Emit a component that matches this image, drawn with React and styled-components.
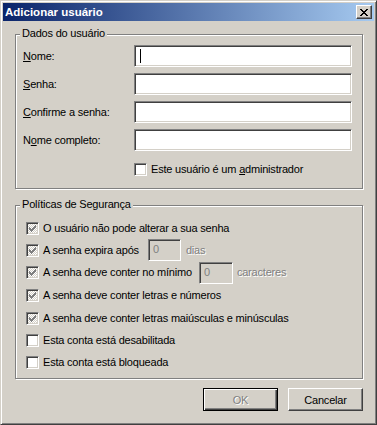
import styled, { createGlobalStyle, css } from "styled-components";

const GlobalStyle = createGlobalStyle`
  html, body {
    margin: 0;
    padding: 0;
    background: #d4d0c8;
  }
  body {
    font-family: "Liberation Sans", Arial, sans-serif;
    font-size: 11px;
    letter-spacing: -0.2px;
    color: #000;
  }
`;

const Window = styled.div`
  box-sizing: border-box;
  width: 377px;
  height: 425px;
  background: #d4d0c8;
  border: 1px solid;
  border-color: #d4d0c8 #404040 #404040 #d4d0c8;
  box-shadow: inset 1px 1px 0 #fff, inset -1px -1px 0 #808080;
  padding: 2px;
  display: flex;
  flex-direction: column;
`;

const TitleBar = styled.div`
  flex: none;
  height: 18px;
  display: flex;
  align-items: center;
  justify-content: space-between;
  padding: 0 2px;
  background: linear-gradient(to right, #0a246a, #a6caf0);
`;

const TitleText = styled.span`
  color: #fff;
  font-weight: bold;
  font-size: 11.5px;
  letter-spacing: 0;
  line-height: 18px;
`;

const raised = css`
  background: #d4d0c8;
  border: 1px solid;
  border-color: #fff #404040 #404040 #fff;
  box-shadow: inset -1px -1px 0 #808080;
`;

const CloseButton = styled.div`
  box-sizing: border-box;
  width: 16px;
  height: 14px;
  ${raised};
  display: flex;
  align-items: center;
  justify-content: center;
  padding-right: 1px;
`;

const Body = styled.div`
  flex: 1;
  display: flex;
  flex-direction: column;
  padding: 13px 11px 0 12px;
`;

const Group = styled.div`
  position: relative;
  border: 1px solid #808080;
  box-shadow: inset 1px 1px 0 #fff, 1px 1px 0 #fff;
  margin-top: ${(p) => p.$top || 0}px;
`;

const Legend = styled.span`
  position: absolute;
  top: -8px;
  left: 4px;
  padding: 0 2px;
  line-height: 13px;
  background: #d4d0c8;
`;

const UserForm = styled.div`
  display: grid;
  grid-template-columns: 111px 218px;
  row-gap: 6px;
  align-items: center;
  padding: 10px 10px 12px 7px;
`;

const FieldLabel = styled.label`
  line-height: 13px;
`;

const sunken = css`
  border: 1px solid;
  border-color: #808080 #fff #fff #808080;
  box-shadow: inset 1px 1px 0 #404040, inset -1px -1px 0 #d4d0c8;
`;

const TextBox = styled.div`
  box-sizing: border-box;
  height: 22px;
  width: ${(p) => p.$width || 218}px;
  ${sunken};
  background: ${(p) => (p.$disabled ? "#d4d0c8" : "#fff")};
  color: #808080;
  padding: 3px 4px;
  line-height: 13px;
  display: flex;
  align-items: flex-start;
`;

const Caret = styled.span`
  display: block;
  width: 1px;
  height: 14px;
  margin-left: 1px;
  background: #000;
`;

const CheckRow = styled.div`
  display: flex;
  align-items: center;
  height: ${(p) => p.$h || 13}px;
  grid-column: ${(p) => p.$col || "auto"};
  margin-top: ${(p) => p.$mt || 0}px;
`;

const Box = styled.span`
  box-sizing: border-box;
  flex: none;
  width: 13px;
  height: 13px;
  ${sunken};
  background: ${(p) =>
    p.$disabled
      ? "repeating-conic-gradient(#fff 0 25%, #d4d0c8 0 50%) 0 0 / 2px 2px"
      : "#fff"};
  display: flex;
`;

const CheckText = styled.span`
  margin-left: 4px;
  line-height: 13px;
  white-space: nowrap;
`;

const Etched = styled.span`
  color: #808080;
  text-shadow: 1px 1px 0 #fff;
  margin-left: ${(p) => p.$ml || 0}px;
  line-height: 13px;
`;

const PolicyList = styled.div`
  display: flex;
  flex-direction: column;
  padding: 11px 10px 5px 10px;
`;

const InlineBox = styled.div`
  margin-left: ${(p) => p.$ml || 6}px;
`;

const ButtonBar = styled.div`
  display: flex;
  justify-content: flex-end;
  gap: 10px;
  margin-top: 9px;
`;

const Button = styled.button`
  box-sizing: border-box;
  width: 75px;
  height: 23px;
  padding: 0;
  font: inherit;
  letter-spacing: inherit;
  color: #000;
  ${raised};
  ${(p) =>
    p.$default &&
    css`
      border-color: #000;
      box-shadow: inset 1px 1px 0 #fff, inset -1px -1px 0 #404040,
        inset -2px -2px 0 #808080;
    `}
  ${(p) =>
    p.disabled &&
    css`
      color: #808080;
      text-shadow: 1px 1px 0 #fff;
    `}
`;

const checkRows = [
  [6, 1],
  [5, 2],
  [0, 1, 4, 3],
  [0, 2, 3, 3],
  [0, 5],
  [1, 3],
  [2, 1],
];

function CheckMark({ color }) {
  return (
    <svg width="11" height="11" viewBox="0 0 11 11" shapeRendering="crispEdges">
      {checkRows.map((row, y) => {
        const rects = [];
        for (let i = 0; i < row.length; i += 2) {
          rects.push(
            <rect key={i} x={2 + row[i]} y={2 + y} width={row[i + 1]} height="1" fill={color} />
          );
        }
        return rects;
      })}
    </svg>
  );
}

const xRows = [
  [0, 2, 6, 2],
  [1, 2, 5, 2],
  [2, 4],
  [3, 2],
  [2, 4],
  [1, 2, 5, 2],
  [0, 2, 6, 2],
];

function CloseGlyph() {
  return (
    <svg width="8" height="7" viewBox="0 0 8 7" shapeRendering="crispEdges">
      {xRows.map((row, y) => {
        const rects = [];
        for (let i = 0; i < row.length; i += 2) {
          rects.push(<rect key={i} x={row[i]} y={y} width={row[i + 1]} height="1" fill="#000" />);
        }
        return rects;
      })}
    </svg>
  );
}

function Checkbox({ checked, disabled }) {
  return (
    <Box $disabled={disabled}>
      {checked && <CheckMark color={disabled ? "#808080" : "#000"} />}
    </Box>
  );
}

const fields = [
  { label: <><u>N</u>ome:</>, caret: true },
  { label: <><u>S</u>enha:</> },
  { label: <><u>C</u>onfirme a senha:</> },
  { label: <>N<u>o</u>me completo:</> },
];

export default function App() {
  return (
    <>
      <GlobalStyle />
      <Window>
        <TitleBar>
          <TitleText>Adicionar usuário</TitleText>
          <CloseButton>
            <CloseGlyph />
          </CloseButton>
        </TitleBar>
        <Body>
          <Group>
            <Legend>Dados do usuário</Legend>
            <UserForm>
              {fields.map((f, i) => [
                <FieldLabel key={"l" + i}>{f.label}</FieldLabel>,
                <TextBox key={"t" + i}>{f.caret && <Caret />}</TextBox>,
              ])}
              <CheckRow $col="2" $mt={6}>
                <Checkbox />
                <CheckText>
                  Este usuário é um <u>a</u>dministrador
                </CheckText>
              </CheckRow>
            </UserForm>
          </Group>

          <Group $top={16}>
            <Legend>Políticas de Segurança</Legend>
            <PolicyList>
              <CheckRow $h={22}>
                <Checkbox checked disabled />
                <CheckText>O usuário não pode alterar a sua senha</CheckText>
              </CheckRow>
              <CheckRow $h={22}>
                <Checkbox checked disabled />
                <CheckText>A senha expira após</CheckText>
                <InlineBox $ml={9}>
                  <TextBox $width={33} $disabled>0</TextBox>
                </InlineBox>
                <Etched $ml={5}>dias</Etched>
              </CheckRow>
              <CheckRow $h={23}>
                <Checkbox checked disabled />
                <CheckText>A senha deve conter no mínimo</CheckText>
                <InlineBox $ml={7}>
                  <TextBox $width={34} $disabled>0</TextBox>
                </InlineBox>
                <Etched $ml={4}>caracteres</Etched>
              </CheckRow>
              <CheckRow $h={23}>
                <Checkbox checked disabled />
                <CheckText>A senha deve conter letras e números</CheckText>
              </CheckRow>
              <CheckRow $h={22}>
                <Checkbox checked disabled />
                <CheckText>A senha deve conter letras maiúsculas e minúsculas</CheckText>
              </CheckRow>
              <CheckRow $h={22}>
                <Checkbox />
                <CheckText>Esta conta está desabilitada</CheckText>
              </CheckRow>
              <CheckRow $h={22}>
                <Checkbox />
                <CheckText>Esta conta está bloqueada</CheckText>
              </CheckRow>
            </PolicyList>
          </Group>

          <ButtonBar>
            <Button $default disabled>
              OK
            </Button>
            <Button>Cancelar</Button>
          </ButtonBar>
        </Body>
      </Window>
    </>
  );
}
